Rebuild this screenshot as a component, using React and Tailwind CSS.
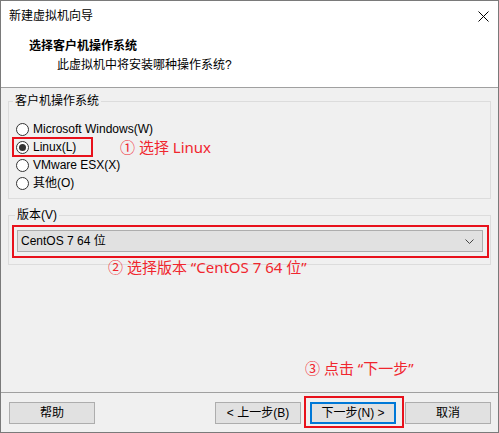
import React from "react";

const ui = "font-['Liberation_Sans','Noto_Sans_CJK_SC',sans-serif]";
const note = "font-['Noto_Sans','Noto_Sans_CJK_SC',sans-serif] text-[15px] leading-[18px] text-[#f0262e] whitespace-nowrap";

function Radio({ label, checked }) {
  return (
    <div className="flex items-center h-[18px]">
      <span className="w-[13px] h-[13px] rounded-full border border-[#333333] bg-white flex items-center justify-center">
        {checked && <span className="w-[7px] h-[7px] rounded-full bg-[#333333]" />}
      </span>
      <span className="ml-[4px] text-[12px] text-black">{label}</span>
    </div>
  );
}

function Button({ children, primary }) {
  return (
    <button
      className={
        "w-[86px] h-[22px] bg-[#e1e1e1] text-[12px] text-black flex items-center justify-center " +
        (primary ? "border-2 border-[#0078d7]" : "border border-[#adadad]")
      }
    >
      {children}
    </button>
  );
}

export default function App() {
  return (
    <div className={`w-[499px] h-[433px] border border-[#7a7a7a] bg-[#f0f0f0] flex flex-col ${ui}`}>
      {/* header */}
      <div className="h-[87px] bg-white border-b border-[#a0a0a0] flex flex-col shrink-0">
        <div className="h-[30px] flex items-center justify-between pl-[8px] pr-[9px]">
          <span className="text-[12px] text-black">新建虚拟机向导</span>
          <svg width="11" height="11" viewBox="0 0 11 11">
            <path d="M0.5 0.5 L10.5 10.5 M10.5 0.5 L0.5 10.5" stroke="#000" strokeWidth="1" />
          </svg>
        </div>
        <div className="pl-[28px] mt-[7px] text-[12px] font-bold text-black leading-[16px]">选择客户机操作系统</div>
        <div className="pl-[56px] mt-[3px] text-[12px] text-black leading-[16px]">此虚拟机中将安装哪种操作系统?</div>
      </div>

      {/* body */}
      <div className="flex-1 px-[7px] flex flex-col">
        <fieldset className="mt-[5px] border border-[#dcdcdc] pl-[7px] pr-[7px] pt-[11px] pb-[6px]">
          <legend className="ml-[-3px] px-[2px] text-[12px] leading-[16px] text-black">客户机操作系统</legend>
          <Radio label="Microsoft Windows(W)" />
          <div className="relative">
            <Radio label="Linux(L)" checked />
            <div className="absolute left-[-4px] top-[-1px] w-[81px] h-[20px] border-2 border-[#e8111b]" />
            <span className={`absolute left-[104px] top-[0px] ${note}`}>① 选择 Linux</span>
          </div>
          <Radio label="VMware ESX(X)" />
          <Radio label="其他(O)" />
        </fieldset>

        <fieldset className="mt-[8px] border border-[#dcdcdc] pl-[8px] pr-[7px] pt-[7px] pb-[12px]">
          <legend className="ml-[-2px] px-[2px] text-[12px] leading-[16px] text-black">版本(V)</legend>
          <div className="relative">
            <div className="h-[22px] bg-[#e1e1e1] border border-[#adadad] flex items-center justify-between pl-[3px] pr-[8px]">
              <span className="text-[12px] text-black">CentOS 7 64 位</span>
              <svg width="9" height="5" viewBox="0 0 9 5">
                <path d="M0.5 0.5 L4.5 4.5 L8.5 0.5" stroke="#444" strokeWidth="1" fill="none" />
              </svg>
            </div>
            <div className="absolute left-[-5px] top-[-5px] right-[-6px] bottom-[-6px] border-2 border-[#e8111b]" />
            <span className={`absolute left-[91px] top-[28px] ${note}`}>② 选择版本 “CentOS 7 64 位”</span>
          </div>
        </fieldset>

        <div className="flex-1 relative">
          <span className={`absolute left-[297px] top-[94px] ${note}`}>③ 点击 “下一步”</span>
        </div>
      </div>

      {/* footer */}
      <div className="h-[40px] border-t border-[#a0a0a0] shrink-0 flex items-start pt-[9px] pl-[8px] pr-[7px]">
        <Button>帮助</Button>
        <div className="ml-auto flex gap-[9px]">
          <Button>&lt; 上一步(B)</Button>
          <div className="relative">
            <Button primary>下一步(N) &gt;</Button>
            <div className="absolute left-[-6px] top-[-6px] right-[-8px] bottom-[-4px] border-2 border-[#e8111b]" />
          </div>
          <Button>取消</Button>
        </div>
      </div>
    </div>
  );
}
